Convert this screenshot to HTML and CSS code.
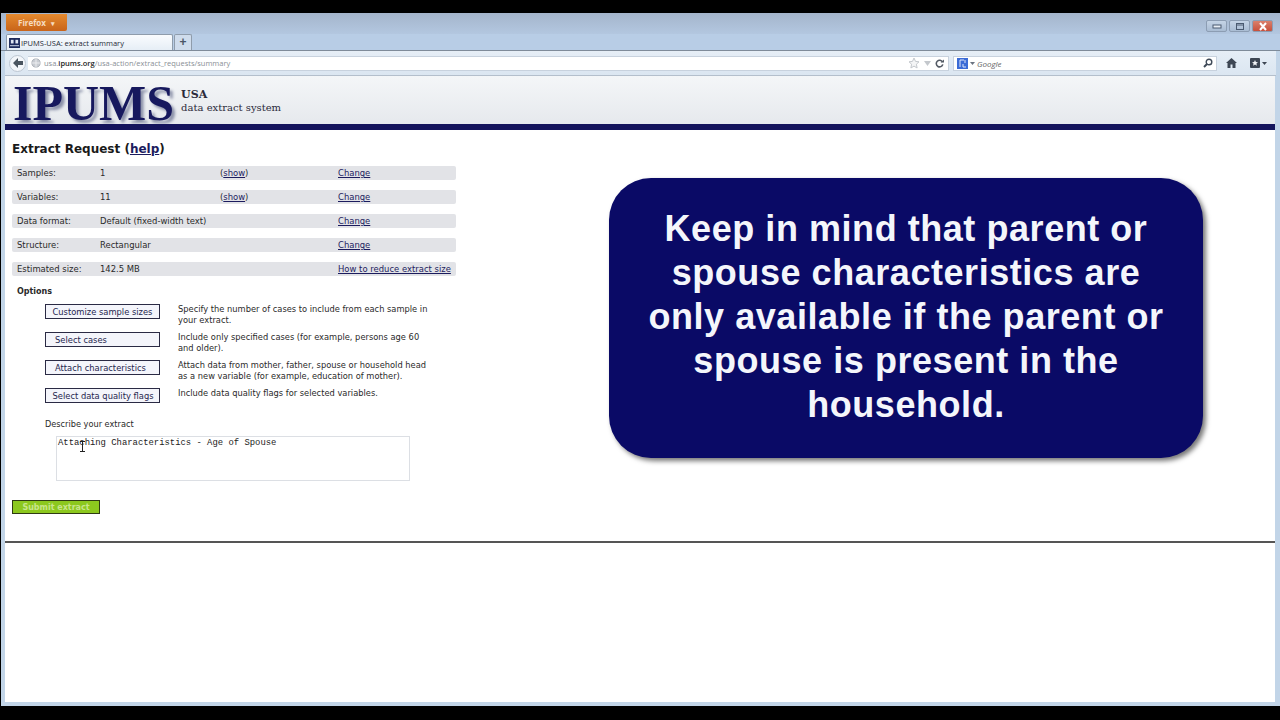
FILE: index.html
```html
<!DOCTYPE html>
<html lang="en">
<head>
    <meta charset="UTF-8">
    <meta name="viewport" content="width=device-width, initial-scale=1.0">
    <title>IPUMS-USA: extract summary</title>
    <link rel="stylesheet" href="styles.css">
</head>
<body>
    <div class="window">
        <div class="titlebar">
            <div class="firefox-btn">Firefox <span class="caret">▾</span></div>
            <div class="win-controls">
                <div class="win-btn"><svg width="10" height="6" viewBox="0 0 10 6"><rect x="1" y="2" width="8" height="3" fill="#e8eef5" stroke="#4a5a70"/></svg></div>
                <div class="win-btn"><svg width="10" height="9" viewBox="0 0 10 9"><rect x="1.5" y="1.5" width="7" height="6" fill="none" stroke="#4a5a70"/><line x1="1" y1="3" x2="9" y2="3" stroke="#4a5a70"/></svg></div>
                <div class="win-btn win-close"><svg width="10" height="9" viewBox="0 0 10 9"><path d="M2 1 L8 8 M8 1 L2 8" stroke="#fff" stroke-width="2"/></svg></div>
            </div>
        </div>
        <div class="tabbar">
            <div class="tab">
                <svg class="favicon" width="11" height="10" viewBox="0 0 12 11"><rect width="12" height="11" fill="#1c2a5c"/><rect x="2" y="2" width="3" height="4" fill="#dfe6f2"/><rect x="7" y="2" width="3" height="4" fill="#dfe6f2"/><rect x="1" y="8" width="10" height="1" fill="#dfe6f2"/></svg>
                <span>IPUMS-USA: extract summary</span>
            </div>
            <div class="new-tab">+</div>
        </div>
        <div class="navbar">
            <div class="back-btn"><svg width="12" height="10" viewBox="0 0 12 10"><path d="M6 0 L1 5 L6 10 L6 7 L11 7 L11 3 L6 3 Z" fill="#4a5560"/></svg></div>
            <div class="urlbar">
                <svg width="10" height="10" viewBox="0 0 11 11"><circle cx="5.5" cy="5.5" r="4.5" fill="#c8ccd2" stroke="#a8adb5"/><path d="M1 5.5 H10 M5.5 1 V10" stroke="#eef0f3"/></svg>
                <span class="url"><span class="url-dim">usa.</span><b>ipums.org</b><span class="url-dim">/usa-action/extract_requests/summary</span></span>
                <div class="url-icons">
                    <svg width="12" height="12" viewBox="0 0 12 12"><path d="M6 1 L7.5 4.4 L11 4.8 L8.4 7.2 L9.1 11 L6 9.1 L2.9 11 L3.6 7.2 L1 4.8 L4.5 4.4 Z" fill="#f4f5f6" stroke="#c4c8cd"/></svg>
                    <svg width="7" height="5" viewBox="0 0 7 5"><path d="M0 0 H7 L3.5 5 Z" fill="#c4c8cd"/></svg>
                    <svg width="9" height="9" viewBox="0 0 9 9"><path d="M7.5 3 A3.3 3.3 0 1 0 7.8 5.4" fill="none" stroke="#555c66" stroke-width="1.6"/><path d="M5.6 3.6 H9 V0.4 Z" fill="#555c66"/></svg>
                </div>
            </div>
            <div class="searchbar">
                <svg width="11" height="11" viewBox="0 0 11 11"><rect width="11" height="11" fill="#3b6bd6"/><path d="M3 2 H7 M3 2 V9 M8 2 V5 M6 6 V9 H9" stroke="#dfe8fb" fill="none"/></svg>
                <svg class="search-caret" width="5" height="3" viewBox="0 0 5 3"><path d="M0 0 H5 L2.5 3 Z" fill="#6a7380"/></svg>
                <span class="search-text">Google</span>
                <svg class="search-icon" width="10" height="10" viewBox="0 0 10 10"><circle cx="6" cy="4" r="2.8" fill="none" stroke="#3f4a58" stroke-width="1.4"/><path d="M4 6 L1 9" stroke="#3f4a58" stroke-width="2"/></svg>
            </div>
            <div class="nav-tools">
                <svg width="11" height="10" viewBox="0 0 11 10"><path d="M5.5 0 L11 5 H9.5 V10 H6.5 V6.5 H4.5 V10 H1.5 V5 H0 Z" fill="#3d4653"/></svg>
                <div class="bookmarks">
                    <svg width="10" height="10" viewBox="0 0 10 10"><rect width="10" height="10" rx="1" fill="#3d4653"/><path d="M5 2 L5.9 4 L8 4.2 L6.4 5.6 L6.9 7.8 L5 6.6 L3.1 7.8 L3.6 5.6 L2 4.2 L4.1 4 Z" fill="#f2f4f6"/></svg>
                    <svg width="5" height="3" viewBox="0 0 5 3"><path d="M0 0 H5 L2.5 3 Z" fill="#3d4653"/></svg>
                </div>
            </div>
        </div>

        <div class="page">
            <div class="site-header">
                <div class="logo">IPUMS</div>
                <div class="logo-text">
                    <div class="logo-usa">USA</div>
                    <div class="logo-sub">data extract system</div>
                </div>
            </div>
            <div class="header-rule"></div>

            <div class="content">
                <h1 class="page-title">Extract Request (<a href="#">help</a>)</h1>

                <div class="summary-row"><span>Samples:</span><span>1</span><span>(<a href="#">show</a>)</span><a href="#">Change</a></div>
                <div class="summary-row"><span>Variables:</span><span>11</span><span>(<a href="#">show</a>)</span><a href="#">Change</a></div>
                <div class="summary-row"><span>Data format:</span><span class="span-2">Default (fixed-width text)</span><a href="#">Change</a></div>
                <div class="summary-row"><span>Structure:</span><span class="span-2">Rectangular</span><a href="#">Change</a></div>
                <div class="summary-row"><span>Estimated size:</span><span class="span-2">142.5 MB</span><a href="#">How to reduce extract size</a></div>

                <h2 class="options-title">Options</h2>

                <div class="option">
                    <button class="option-btn tight">Customize sample sizes</button>
                    <p>Specify the number of cases to include from each sample in your extract.</p>
                </div>
                <div class="option">
                    <button class="option-btn">Select cases</button>
                    <p>Include only specified cases (for example, persons age 60 and older).</p>
                </div>
                <div class="option">
                    <button class="option-btn">Attach characteristics</button>
                    <p>Attach data from mother, father, spouse or household head as a new variable (for example, education of mother).</p>
                </div>
                <div class="option">
                    <button class="option-btn tight">Select data quality flags</button>
                    <p>Include data quality flags for selected variables.</p>
                </div>

                <div class="describe-label">Describe your extract</div>
                <div class="describe-wrap">
                    <textarea class="describe-box" readonly>Attaching Characteristics - Age of Spouse</textarea>
                    <svg class="ibeam" width="7" height="11" viewBox="0 0 7 11"><path d="M1 0.5 H6 M3.5 0.5 V10.5 M1 10.5 H6" stroke="#222" fill="none"/></svg>
                </div>

                <button class="submit-btn">Submit extract</button>
            </div>

            <div class="footer-rule"></div>

            <div class="callout">Keep in mind that parent or spouse characteristics are only available if the parent or spouse is present in the household.</div>
        </div>
    </div>
</body>
</html>
```

FILE: styles.css
```css
html, body {
    margin: 0;
    padding: 0;
    height: 720px;
    overflow: hidden;
    background: #000;
}
body {
    font-family: "DejaVu Sans", Verdana, sans-serif;
    font-size: 8.45px;
    color: #2a2a2a;
    display: flex;
    flex-direction: column;
    padding: 13px 0 14px;
    box-sizing: border-box;
}
a {
    color: #1c1c5e;
}
.window {
    flex: 1;
    display: flex;
    flex-direction: column;
    margin: 0 0 0 1px;
    padding: 0 4px 4px;
    background: #c2d5e8;
    min-height: 0;
}

/* browser chrome */
.titlebar {
    height: 21px;
    margin: 0 -4px;
    padding: 0 2px 0 5px;
    display: flex;
    justify-content: space-between;
    background: linear-gradient(#a4b5cb, #b3c7e0);
}
.firefox-btn {
    width: 61px;
    height: 17px;
    margin-top: 1px;
    box-sizing: border-box;
    padding: 3px 0 0 12px;
    font: bold 8px "Open Sans", sans-serif;
    color: #f6dcc0;
    background: linear-gradient(#e58a2e, #c8641a);
    border-radius: 0 0 2px 2px;
}
.caret {
    font-size: 7px;
    margin-left: 3px;
}
.win-controls {
    display: flex;
    gap: 2px;
    margin: 7px 0 0;
    padding-right: 5px;
}
.win-btn {
    width: 21px;
    height: 12px;
    display: flex;
    align-items: center;
    justify-content: center;
    background: linear-gradient(#c5d4e6, #a9bcd3);
    border: 1px solid #8c9db3;
    border-radius: 2px;
    box-sizing: border-box;
}
.win-close {
    background: linear-gradient(#d9806c, #c8503c);
}
.tabbar {
    height: 17px;
    display: flex;
    align-items: flex-end;
    gap: 1px;
    border-bottom: 1px solid #7f8b99;
    box-sizing: border-box;
    margin: 0 -4px;
    padding-left: 5px;
    background: #b8cde6;
}
.tab {
    width: 167px;
    height: 16px;
    box-sizing: border-box;
    display: flex;
    align-items: center;
    gap: 1px;
    padding-left: 2px;
    font: 7.5px "Open Sans", sans-serif;
    color: #1e2a36;
    background: linear-gradient(#fafcfe, #e6eef6);
    border: 1px solid #8f9cab;
    border-bottom: 0;
    border-radius: 2px 2px 0 0;
}
.new-tab {
    width: 18px;
    height: 16px;
    box-sizing: border-box;
    text-align: center;
    font: bold 12px/15px "Liberation Sans", sans-serif;
    color: #4a5666;
    background: #cfdcec;
    border: 1px solid #8f9cab;
    border-bottom: 0;
    border-radius: 2px 2px 0 0;
}
.navbar {
    height: 25px;
    display: flex;
    align-items: center;
    box-sizing: border-box;
    padding: 0 6px 0 4px;
    background: linear-gradient(#e6eef6, #dbe6f1);
    border-bottom: 1px solid #b4bfcc;
}
.back-btn {
    width: 17px;
    height: 17px;
    display: flex;
    align-items: center;
    justify-content: center;
    background: #f3f6fa;
    border: 1px solid #bcc6d2;
    border-radius: 50%;
    box-sizing: border-box;
    flex: none;
}
.urlbar {
    flex: none;
    width: 921px;
    height: 15px;
    margin-left: 2px;
    padding: 0 3px;
    display: flex;
    align-items: center;
    gap: 2px;
    box-sizing: border-box;
    background: #fff;
    border: 1px solid #c8d2de;
    border-left: 0;
    font: 7.5px "Open Sans", sans-serif;
}
.url {
    color: #222;
    margin-left: 1px;
}
.url b {
    font-weight: 600;
}
.url-dim {
    color: #8a8f96;
}
.url-icons {
    margin-left: auto;
    display: flex;
    align-items: center;
    gap: 4px;
    padding-right: 1px;
}
.searchbar {
    flex: none;
    width: 264px;
    height: 15px;
    margin-left: 4px;
    padding: 0 3px 0 3px;
    display: flex;
    align-items: center;
    box-sizing: border-box;
    background: #fff;
    border: 1px solid #c8d2de;
}
.search-caret {
    margin-left: 2px;
}
.search-text {
    margin-left: 2px;
    font: italic 8px "Open Sans", sans-serif;
    color: #666;
}
.search-icon {
    margin-left: auto;
}
.nav-tools {
    display: flex;
    align-items: center;
    margin-left: 9px;
    gap: 13px;
}
.bookmarks {
    display: flex;
    align-items: center;
    gap: 2px;
}

/* page */
.page {
    flex: 1;
    position: relative;
    background: #fff;
    min-height: 0;
    display: flex;
    flex-direction: column;
    margin-right: 1px;
}
.site-header {
    height: 48px;
    flex: none;
    display: flex;
    align-items: flex-start;
    box-sizing: border-box;
    padding: 4px 0 0 8px;
    background: linear-gradient(#f4f6f8, #e6e9ed);
}
.logo {
    font: bold 50px/46px "Liberation Serif", serif;
    color: #17195e;
    text-shadow: 3px 3px 3px #8a90a8;
}
.logo-text {
    margin: 9px 0 0 7px;
    font-family: "DejaVu Serif", serif;
    color: #2a2a3a;
}
.logo-usa {
    font-size: 11px;
    font-weight: bold;
    line-height: 12px;
}
.logo-sub {
    font-size: 10px;
    line-height: 13px;
}
.header-rule {
    height: 6px;
    flex: none;
    background: #14145c;
}
.content {
    padding: 0 0 0 7px;
    height: 411px;
    flex: none;
    box-sizing: border-box;
}
.page-title {
    margin: 0;
    padding: 11px 0 9px;
    font-size: 12px;
    line-height: 16px;
    font-weight: bold;
    color: #1a1a1a;
}
.summary-row {
    width: 444px;
    height: 14px;
    margin-bottom: 10px;
    box-sizing: border-box;
    padding-left: 5px;
    display: grid;
    grid-template-columns: 83px 120px 118px 1fr;
    line-height: 14px;
    background: #e2e3e7;
    border-radius: 2px;
    white-space: nowrap;
}
.span-2 {
    grid-column: span 2;
}
.options-title {
    margin: 1px 0 7px 5px;
    font-size: 8px;
    line-height: 11px;
    font-weight: bold;
}
.option {
    display: flex;
    align-items: flex-start;
    height: 28px;
    padding-left: 33px;
    font-size: 8.3px;
}
.option p {
    margin: 0 0 0 18px;
    width: 254px;
    line-height: 11px;
}
.option-btn {
    width: 115px;
    height: 15px;
    flex: none;
    padding: 0 0 0 9px;
    text-align: left;
    white-space: nowrap;
    font: 8.35px "DejaVu Sans", sans-serif;
    color: #26264e;
    background: #f4f5fb;
    border: 1px solid #2a2a44;
    border-radius: 0;
}
.option-btn.tight {
    padding-left: 6.5px;
}
.describe-label {
    margin: 3px 0 0 33px;
    font-size: 8.2px;
    line-height: 11px;
}
.describe-wrap {
    position: relative;
    margin: 6px 0 0 44px;
    width: 354px;
    height: 45px;
}
.describe-box {
    display: block;
    width: 354px;
    height: 45px;
    box-sizing: border-box;
    margin: 0;
    padding: 1px 1px;
    font: 8.9px/11px "Liberation Mono", monospace;
    color: #222;
    background: #fff;
    border: 1px solid #dcdfe4;
    resize: none;
    outline: none;
}
.ibeam {
    position: absolute;
    left: 23px;
    top: 5px;
}
.submit-btn {
    display: block;
    width: 88px;
    height: 14px;
    margin-top: 19px;
    padding: 0;
    font: bold 8px "DejaVu Sans", sans-serif;
    color: #c9e58c;
    background: #8cc81e;
    border: 1px solid #2f3a14;
}
.footer-rule {
    height: 2px;
    flex: none;
    background: #555;
}
.callout {
    position: absolute;
    left: 604px;
    top: 102px;
    width: 594px;
    height: 280px;
    box-sizing: border-box;
    padding: 29px 32px 0;
    text-align: center;
    font: bold 36px/44px "Liberation Sans", sans-serif;
    letter-spacing: 0.55px;
    color: #f4f6fb;
    background: #0a0a66;
    border-radius: 42px;
    box-shadow: 3px 3px 5px #777;
}
```
